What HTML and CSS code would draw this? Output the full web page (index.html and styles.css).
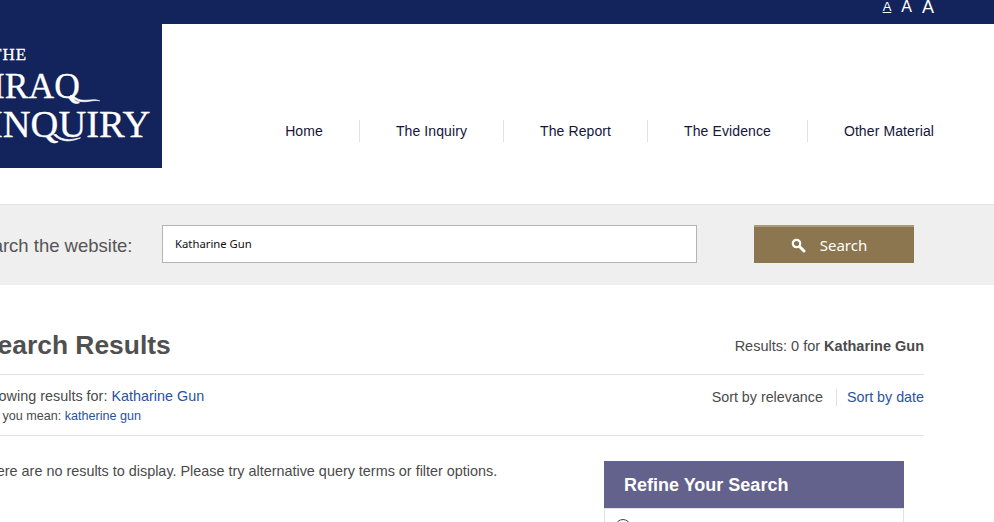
FILE: index.html
```html
<!DOCTYPE html>
<html lang="en">
<head>
  <meta charset="UTF-8">
  <title>Search Results - The Iraq Inquiry</title>
  <link rel="stylesheet" href="styles.css">
</head>
<body>

  <div class="top-bar">
    <a href="#" class="size size-small">A</a>
    <a href="#" class="size size-medium">A</a>
    <a href="#" class="size size-large">A</a>
  </div>

  <header class="site-header">
    <a href="#" class="logo">
      <span class="logo-the">THE</span>
      <span class="logo-iraq">IRAQ</span>
      <span class="logo-inquiry">INQUIRY</span>
      <svg class="swash swash-iraq" width="32" height="9" viewBox="0 0 50 14"><path d="M2 1C9 8 18 12 30 10C36 9 42 8 48 9C40 6 34 8 28 8C18 9 11 6 6 0Z" fill="#fff" stroke="#fff"/></svg>
      <svg class="swash swash-inquiry" width="30" height="9" viewBox="0 0 40 12"><path d="M2 1C8 7 16 10 24 9C29 8.500 34 7 38 5C33 6 28 7.500 23 7.500C15 7.500 9 5 5 0Z" fill="#fff" stroke="#fff"/></svg>
    </a>
    <nav class="main-nav">
      <a href="#">Home</a>
      <a href="#">The Inquiry</a>
      <a href="#">The Report</a>
      <a href="#">The Evidence</a>
      <a href="#">Other Material</a>
    </nav>
  </header>

  <section class="search-band">
    <label class="search-label" for="q">Search the website:</label>
    <input class="search-input" id="q" type="text" value="Katharine Gun">
    <button class="search-button">
      <svg width="15" height="15" viewBox="0 0 15 15"><circle cx="5.500" cy="5.500" r="3.700" fill="none" stroke="#fff" stroke-width="2.200"/><path d="M8.500 8.500L13 13" stroke="#fff" stroke-width="3" stroke-linecap="round"/></svg>
      Search
    </button>
  </section>

  <section class="results">
    <div class="results-head">
      <h1>Search Results</h1>
      <p>Results: 0 for <b>Katharine Gun</b></p>
    </div>

    <div class="results-info">
      <div>
        <p class="showing">Showing results for: <a href="#">Katharine Gun</a></p>
        <p class="did-you-mean">Did you mean: <a href="#">katherine gun</a></p>
      </div>
      <div class="sort">
        <span>Sort by relevance</span>
        <a href="#">Sort by date</a>
      </div>
    </div>

    <div class="results-body">
      <p class="no-results">There are no results to display. Please try alternative query terms or filter options.</p>
      <aside class="refine">
        <h2>Refine Your Search</h2>
        <div class="refine-body"><span class="radio"></span></div>
      </aside>
    </div>
  </section>

</body>
</html>
```

FILE: styles.css
```css
html, body {
  height: 522px;
  overflow: hidden;
}

body {
  font-family: 'Liberation Sans', Arial, sans-serif;
  margin: 0;
  padding: 0;
  background-color: #fff;
  color: #4a4a4a;
}

a {
  text-decoration: none;
}

p, h1, h2 {
  margin: 0;
}

.top-bar {
  height: 24px;
  background-color: #13235b;
  display: flex;
  justify-content: flex-end;
  align-items: flex-start;
  gap: 10px;
  padding-right: 60px;
  line-height: 14px;
}

.size {
  color: #fff;
}

.size-small {
  font-size: 13px;
  text-decoration: underline;
}

.size-medium {
  font-size: 16px;
}

.size-large {
  font-size: 18px;
}

.site-header {
  height: 180px;
  display: flex;
  justify-content: space-between;
  border-bottom: 1px solid #e2e2e2;
}

.logo {
  position: relative;
  display: block;
  flex: none;
  width: 162px;
  height: 144px;
  overflow: hidden;
  background-color: #13235b;
  color: #fff;
  font-family: 'Liberation Serif', serif;
  -webkit-text-stroke: 0.3px #fff;
}

.logo span {
  position: absolute;
  white-space: nowrap;
}

.logo-the {
  left: -9px;
  top: 21px;
  font-size: 17px;
  letter-spacing: 1px;
}

.logo-iraq {
  left: -7px;
  top: 41px;
  font-size: 35.500px;
}

.logo-inquiry {
  left: -10px;
  top: 78px;
  font-size: 38.500px;
}

.swash {
  position: absolute;
}

.swash-iraq {
  left: 69px;
  top: 71px;
}

.swash-inquiry {
  left: 52px;
  top: 110px;
}

.main-nav {
  display: flex;
  align-items: center;
  height: 22px;
  margin-top: 96px;
  padding-right: 60px;
}

.main-nav a {
  font-size: 14px;
  letter-spacing: 0.1px;
  color: #14143c;
  padding: 0 36px;
  line-height: 22px;
  border-left: 1px solid #e2e2e2;
}

.main-nav a:first-child {
  border-left: none;
}

.main-nav a:last-child {
  padding-right: 0;
}

.search-band {
  box-sizing: border-box;
  height: 80px;
  padding-bottom: 2px;
  background-color: #efefef;
  display: flex;
  align-items: center;
  margin-left: -30px;
}

.search-label {
  width: 162px;
  font-size: 18.500px;
  color: #555;
  white-space: nowrap;
  flex: none;
  margin-right: 30px;
  margin-top: 4px;
}

.search-input {
  box-sizing: border-box;
  width: 535px;
  height: 38px;
  border: 1px solid #b4b4b4;
  padding: 0 12px 2px;
  font-family: 'Noto Sans', sans-serif;
  font-size: 11.300px;
  color: #111;
  background-color: #fff;
}

.search-button {
  box-sizing: border-box;
  width: 160px;
  height: 38px;
  margin-left: 57px;
  padding: 0 10px 0 0;
  border: none;
  border-top: 2px solid #a99a7d;
  background-color: #8b7650;
  color: #fff;
  font-family: 'Noto Sans', sans-serif;
  font-size: 15px;
  display: flex;
  align-items: center;
  justify-content: center;
  gap: 14px;
}

.results {
  width: 944px;
  margin-left: -20px;
}

.results-head {
  height: 90px;
  box-sizing: border-box;
  padding-top: 44px;
  display: flex;
  justify-content: space-between;
  align-items: flex-start;
  border-bottom: 1px solid #e2e2e2;
}

.results-head h1 {
  font-size: 26.400px;
  line-height: 32px;
  color: #505050;
}

.results-head p {
  font-size: 14.500px;
  line-height: 34px;
}

.results-info {
  height: 61px;
  box-sizing: border-box;
  padding-top: 13px;
  display: flex;
  justify-content: space-between;
  align-items: flex-start;
  border-bottom: 1px solid #e2e2e2;
}

.results-info a {
  color: #2a52a0;
}

.showing {
  font-size: 14.400px;
  line-height: 17px;
  margin-left: 1px;
}

.did-you-mean {
  font-size: 12.600px;
  line-height: 16px;
  margin-top: 3px;
}

.sort {
  display: flex;
  font-size: 14.300px;
  line-height: 17px;
  margin-top: 1px;
}

.sort span {
  padding-right: 13px;
  border-right: 1px solid #e2e2e2;
}

.sort a {
  padding-left: 10px;
}

.results-body {
  display: flex;
  justify-content: space-between;
  padding-top: 25px;
  padding-right: 20px;
}

.no-results {
  font-size: 14.400px;
  line-height: 20px;
}

.refine {
  width: 300px;
  flex: none;
}

.refine h2 {
  background-color: #62628c;
  color: #fff;
  font-size: 18px;
  height: 47px;
  line-height: 49px;
  padding-left: 20px;
}

.refine-body {
  height: 15px;
  overflow: hidden;
  box-sizing: border-box;
  border: 1px solid #e2e2e2;
  padding: 10px 10px 0;
}

.radio {
  display: block;
  box-sizing: border-box;
  width: 16px;
  height: 16px;
  border: 1px solid #444;
  border-radius: 50%;
}
```
